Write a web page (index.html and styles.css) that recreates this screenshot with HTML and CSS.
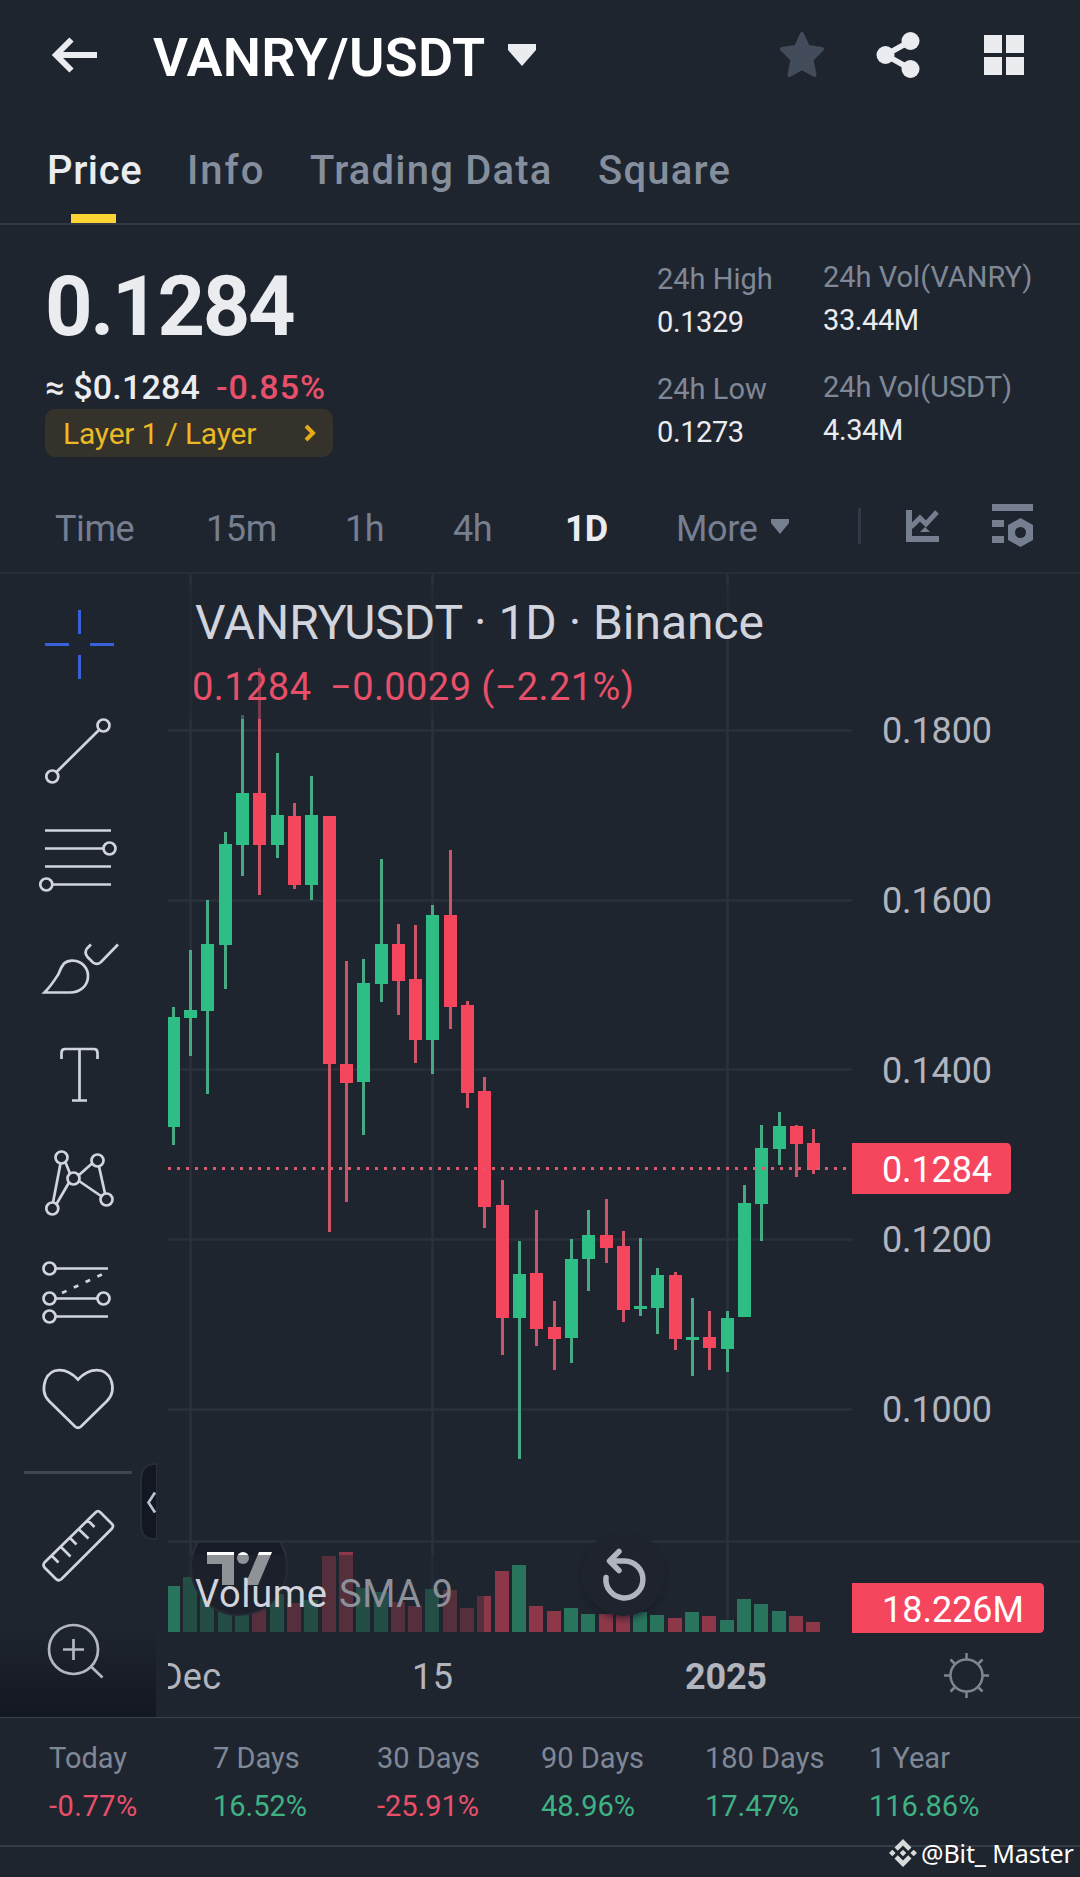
FILE: index.html
```
<!DOCTYPE html>
<html lang="en">
<head>
<meta charset="utf-8">
<title>VANRY/USDT</title>
<link rel="stylesheet" href="styles.css">
</head>
<body>
<header class="topbar">
  <svg class="back" width="46" height="36" viewBox="0 0 46 36"><path d="M45 18H5M19.500 2.500L4 18l15.500 15.500" fill="none" stroke="#eaecef" stroke-width="6"/></svg>
  <h1 class="pair">VANRY/USDT</h1>
  <svg class="pair-caret" width="28" height="23" viewBox="0 0 28 23"><path d="M0 0h28v6L14 22 0 6z" fill="#eaecef"/></svg>
  <svg class="star" width="46" height="48" viewBox="0 0 46 48"><path d="M23 3l6 13 14 2-10.500 10.500L35.500 44 23 37 10.500 44l3-15.500L3 18l14-2z" fill="#434c5a" stroke="#434c5a" stroke-width="4" stroke-linejoin="round"/></svg>
  <svg class="share" width="44" height="48" viewBox="0 0 44 48"><path d="M34.500 10L9.500 24l25 14" fill="none" stroke="#eaecef" stroke-width="5.500"/><g fill="#eaecef"><circle cx="34.500" cy="10" r="9"/><circle cx="9.500" cy="24" r="9"/><circle cx="34.500" cy="38" r="9"/></g></svg>
  <svg class="grid-icon" width="40" height="40" viewBox="0 0 40 40"><path d="M0 0h18v18H0zM22 0h18v18H22zM0 22h18v18H0zM22 22h18v18H22z" fill="#eaecef"/></svg>
</header>

<nav class="tabs">
  <span class="tab tab-active">Price</span>
  <span class="tab tab-info">Info</span>
  <span class="tab tab-data">Trading Data</span>
  <span class="tab tab-square">Square</span>
</nav>

<section class="summary">
  <div class="quote">
    <div class="last">0.1284</div>
    <div class="approx"><span class="usd">≈ $0.1284</span><span class="change">-0.85%</span></div>
    <div class="tag"><span>Layer 1 / Layer</span><svg width="12" height="18" viewBox="0 0 12 18"><path d="M2 2l7 7-7 7" fill="none" stroke="#e3ab16" stroke-width="4"/></svg></div>
  </div>
  <dl class="stats">
    <div><dt>24h High</dt><dd>0.1329</dd></div>
    <div><dt>24h Low</dt><dd>0.1273</dd></div>
  </dl>
  <dl class="stats stats-vol">
    <div><dt>24h Vol(VANRY)</dt><dd>33.44M</dd></div>
    <div><dt>24h Vol(USDT)</dt><dd>4.34M</dd></div>
  </dl>
</section>

<nav class="intervals">
  <span>Time</span><span>15m</span><span>1h</span><span>4h</span><span class="on">1D</span><span class="more">More</span>
  <svg width="18" height="15" viewBox="0 0 18 15"><path d="M0 0h18v4L9 15 0 4z" fill="#767f90"/></svg>
  <i class="divider"></i>
  <svg width="34" height="34" viewBox="0 0 34 34"><path d="M3 1v29h30" fill="none" stroke="#767f90" stroke-width="6"/><path d="M5 18l9-9 6 6L31 3" fill="none" stroke="#767f90" stroke-width="5"/><path d="M14 23l5-5 5 5z" fill="#767f90"/></svg>
  <svg width="42" height="44" viewBox="0 0 42 44"><path d="M0 0h41v7H0zM0 16h12v7H0zM0 32h12v7H0zM28.500 14L41 21v15l-12.500 7L16 36V21z" fill="#767f90"/><circle cx="28.500" cy="28.500" r="5.500" fill="#1f252f"/></svg>
</nav>

<main class="workspace">
  <aside class="tools">
    <svg width="156" height="118" viewBox="0 574 156 118"><path class="cross" d="M45 644.500H69M90 644.500H114M79.500 610V634M79.500 655V679"/></svg>
    <svg width="156" height="118" viewBox="0 692 156 118"><path d="M56.500 772L99 730"/><circle cx="103.500" cy="725.500" r="6"/><circle cx="52.300" cy="776.500" r="6"/></svg>
    <svg width="156" height="118" viewBox="0 810 156 118"><path d="M45 830.500H111M45 848.500H103M45 866.500H111M53 884.500H111"/><circle cx="109.500" cy="848.500" r="6"/><circle cx="46.300" cy="884.500" r="6"/></svg>
    <svg width="156" height="112" viewBox="0 928 156 112"><path d="M44.500 992.500C51 986 54 981 58.500 974C60 970 61 967 64 963.500C67 961 70 960.500 73 960.700C82 961 88 968 88 976C88 986 80 992.500 70 992.500zM91 944.500L87 948.500Q84 952.500 87.500 957L93 962.500Q97 965.500 101 962L118 944.500"/></svg>
    <svg width="156" height="90" viewBox="0 1040 156 90"><path d="M61.500 1059V1053Q61.500 1049 65 1049H94Q97.500 1049 97.500 1053V1059M79.500 1049V1100.500M72 1100.500H87"/></svg>
    <svg width="156" height="110" viewBox="0 1130 156 110"><path d="M60.500 1163.500L53 1202.500M65.500 1162.500L70 1173.500M79 1175L92 1163.500M79 1181L101 1196M69 1182.500L56.500 1204M99 1166.500L105 1193.500"/><circle cx="61.500" cy="1157.500" r="6"/><circle cx="97.500" cy="1160.500" r="6"/><circle cx="73.500" cy="1178.500" r="6"/><circle cx="106.500" cy="1199.500" r="6"/><circle cx="52.300" cy="1208.500" r="6"/></svg>
    <svg width="156" height="110" viewBox="0 1240 156 110"><path d="M56 1268.500H108M56 1298.500H97M56 1316.500H108"/><path d="M62 1293L104 1273.500" stroke-dasharray="5 8"/><circle cx="49.500" cy="1268.500" r="6"/><circle cx="49.500" cy="1298.500" r="6"/><circle cx="103.500" cy="1298.500" r="6"/><circle cx="49.500" cy="1316.500" r="6"/></svg>
    <svg width="156" height="112" viewBox="0 1350 156 112"><path d="M78 1379.500C66 1367 51 1367 45.500 1380C42 1390 44 1396 49 1401L75 1426.500Q78 1429 81 1426.500L107 1401C112 1396 114.500 1390 111 1380C105.500 1367 90 1367 78 1379.500z"/></svg>
    <svg width="156" height="88" viewBox="0 1462 156 88"><path class="rule" d="M24 1472.500H132"/><path class="fold" d="M157 1464H152Q141 1466 141 1480V1524Q141 1538 152 1539H157z"/><path class="fold-arrow" d="M155 1492.500L148.500 1502.500L155 1512.500"/></svg>
    <svg class="low" width="156" height="167" viewBox="0 1550 156 167"><path d="M95.500 1512.500Q98 1510 100.500 1512.500L112 1524Q114 1526 112 1528.500L61.500 1579Q58.500 1581.500 56 1579L44.500 1567.500Q42.500 1565 44.500 1562.500zM52 1556L58.500 1562.500M61 1547L70.500 1556.500M70 1538L76.500 1544.500M79 1529.500L88.500 1538.500M88 1520.500L94.500 1527"/><g class="zoomer"><circle cx="73.500" cy="1649.500" r="24.500"/><path d="M63 1649.500H84M73.500 1639V1660M91 1666.500L102.500 1677.500"/></g></svg>
  </aside>
  <svg id="chart" class="chart" width="912" height="1143" viewBox="168 574 912 1143">
    <defs>
      <clipPath id="volume-pane"><rect x="168" y="1543" width="684" height="90"/></clipPath>
      <filter id="shadow" x="-30%" y="-30%" width="160%" height="160%"><feGaussianBlur stdDeviation="3"/></filter>
    </defs>
    <path class="gridline" d="M168 730.500H852M168 900.500H852M168 1069.500H852M168 1239.500H852M168 1409.500H852M190.500 574V1632M432.500 574V1632M727.500 574V1632M168 1541.500H1080"/>
    <g id="candles"></g>
    <path class="last-line" d="M168 1168.500H852"/>
    <rect class="veil" x="182" y="585" width="600" height="55"/>
    <rect class="veil" x="182" y="640" width="465" height="79"/>
    <text class="symbol" x="195" y="639" textLength="569">VANRYUSDT · 1D · Binance</text>
    <text class="delta" x="192" y="700" textLength="119">0.1284</text>
    <text class="delta" x="330" y="700" textLength="304">−0.0029 (−2.21%)</text>
    <g id="volume"></g>
    <g clip-path="url(#volume-pane)">
      <circle cx="239" cy="1567" r="48" fill="#171b27" stroke="#2b2f3a" stroke-width="2"/>
      <path d="M207 1552h27v33h-12v-21h-15zM259 1552h13l-14 33h-13z" fill="#fff"/><circle cx="243" cy="1558" r="6" fill="#fff"/>
    </g>
    <rect class="veil" x="183" y="1555" width="301" height="78"/>
    <text class="vol" x="195" y="1607" textLength="132">Volume</text>
    <text class="vol sma" x="339" y="1607" textLength="114">SMA 9</text>
    <circle cx="623.500" cy="1578" r="41" fill="#151921" filter="url(#shadow)" opacity=".6"/>
    <circle cx="623.500" cy="1574" r="42" fill="#1f232d"/>
    <path class="reset" d="M606 1577.500A18.500 18.500 0 1 0 624.500 1561H610M619 1551.500L609.500 1561L619 1570.500"/>
    <g class="axis">
      <text x="882" y="743" textLength="110">0.1800</text>
      <text x="882" y="913" textLength="110">0.1600</text>
      <text x="882" y="1083" textLength="110">0.1400</text>
      <text x="882" y="1252" textLength="110">0.1200</text>
      <text x="882" y="1422" textLength="110">0.1000</text>
      <text x="159" y="1689" textLength="62">Dec</text>
      <text x="412" y="1689" textLength="41">15</text>
      <text class="year" x="685" y="1689" textLength="82">2025</text>
    </g>
    <path class="badge" d="M852 1143h154q5 0 5 5v41q0 5-5 5h-154zM852 1583h187q5 0 5 5v40q0 5-5 5h-187z"/>
    <text class="badge-text" x="882" y="1182" textLength="110">0.1284</text>
    <text class="badge-text" x="882" y="1622" textLength="142">18.226M</text>
    <g class="gear"><circle cx="966.500" cy="1675.500" r="16"/><path d="M966.500 1653v6M966.500 1692v6M944 1675.500h6M983 1675.500h6M950.500 1659.500l4 4M978.500 1687.500l4 4M950.500 1691.500l4-4M978.500 1663.500l4-4"/></g>
  </svg>
</main>

<section class="returns">
  <div><span>Today</span><b class="down today">-0.77%</b></div>
  <div><span>7 Days</span><b>16.52%</b></div>
  <div><span>30 Days</span><b class="down">-25.91%</b></div>
  <div><span>90 Days</span><b>48.96%</b></div>
  <div><span>180 Days</span><b>17.47%</b></div>
  <div><span>1 Year</span><b>116.86%</b></div>
</section>

<div class="watermark">
  <svg width="28" height="28" viewBox="0 0 28 28" fill="#d9dadc"><path d="M14 0l8.500 8.500-3.300 3.300L14 6.600l-5.200 5.200-3.300-3.300zM14 28l8.500-8.500-3.300-3.300-5.200 5.200-5.200-5.200-3.300 3.300zM3.300 10.700L6.600 14l-3.300 3.300L0 14zM24.700 10.700L28 14l-3.300 3.300-3.300-3.300zM14 10.700l3.300 3.300-3.300 3.300-3.300-3.300z"/></svg>
  <span>@Bit_ Master</span>
</div>
<script src="chart.js"></script>
</body>
</html>
```
FILE: styles.css
```
* { box-sizing: border-box; }
body { margin: 0; width: 1080px; height: 1877px; overflow: hidden; background: #1f252f; color: #eaecef; font-family: Roboto, "Liberation Sans", sans-serif; position: relative; }
svg { display: block; flex: none; }
span, dt, dd, b, .last { white-space: nowrap; }

.topbar { height: 110px; display: flex; align-items: center; padding-left: 52px; }
.pair { margin: 6px 0 0 55px; width: 336px; font-size: 54px; line-height: 60px; font-weight: 600; color: #fff; letter-spacing: .3px; white-space: nowrap; }
.pair-caret { margin-left: 19px; }
.star { margin-left: 243px; }
.share { margin-left: 51px; }
.grid-icon { margin-left: 64px; }

.tabs { height: 115px; border-bottom: 2px solid #323943; display: flex; padding: 39px 0 0 47px; font-size: 40px; line-height: 44px; font-weight: 500; color: #848e9c; }
.tab { position: relative; letter-spacing: 1.200px; }
.tab-active { width: 140px; color: #eaecef; letter-spacing: .6px; }
.tab-active::after { content: ""; position: absolute; left: 24px; bottom: 0; width: 45px; height: 9px; background: #fcd535; }
.tab-info { width: 123px; letter-spacing: 2px; }
.tab-data { width: 288px; }

.summary { height: 255px; display: flex; padding-left: 45px; }
.quote { width: 612px; padding-top: 40px; }
.last { font-size: 83px; line-height: 84px; font-weight: 700; letter-spacing: -2.300px; }
.approx { display: flex; margin-top: 17px; font-size: 34px; line-height: 42px; font-weight: 500; letter-spacing: .2px; }
.usd { width: 171px; }
.change { color: #e8506a; letter-spacing: 1px; }
.tag { margin-top: 1px; width: 288px; height: 48px; border-radius: 10px; background: #34322b; color: #eab923; display: flex; align-items: center; justify-content: space-between; padding: 0 17px 0 18px; font-size: 30px; letter-spacing: -.2px; }
.stats { margin: 0; width: 166px; padding-top: 34px; font-size: 29px; line-height: 40px; }
.stats div { height: 110px; }
.stats dt { color: #7f8897; }
.stats dd { margin: 3px 0 0; font-size: 29px; letter-spacing: -.4px; }
.stats-vol { padding-top: 32px; width: auto; }

.intervals { height: 94px; border-bottom: 2px solid #272d37; display: grid; grid-template-columns: 151px 139px 108px 112px 111px 95px 87px 48px 86px auto; align-items: center; padding-left: 55px; font-size: 36px; line-height: 40px; color: #767f90; letter-spacing: -.4px; }
.intervals span { padding-top: 5px; }
.intervals .on { color: #eaecef; font-weight: 700; letter-spacing: -1px; }
.divider { width: 3px; height: 36px; background: #323944; }

.workspace { display: flex; height: 1144px; border-bottom: 1px solid #39414b; }
.tools { width: 156px; margin-right: 12px; }
.tools svg { fill: none; stroke: #d1d4dc; stroke-width: 2.700; overflow: visible; }
.tools .cross { stroke: #3861d9; stroke-width: 3; }
.tools .rule { stroke: #434651; stroke-width: 3; }
.tools .fold { fill: #131722; stroke: #272c37; stroke-width: 2; clip-path: inset(0 1px 0 0); }
.tools .fold-arrow { stroke: #b8c4cf; }
.tools .low { background: linear-gradient(to bottom, rgba(19,23,34,0) 45%, #131722 100%); }
.tools .zoomer { stroke: #b4b7c0; }

.chart { overflow: hidden; font-family: Roboto, "Liberation Sans", sans-serif; }
.gridline { stroke: #2b313b; stroke-width: 2.500; fill: none; }
.veil { fill: #1f252f; opacity: .5; }
.last-line { stroke: #dc5a6e; stroke-width: 3; stroke-dasharray: 3 6; }
.symbol { font-size: 48px; fill: #d1d4dc; }
.delta { font-size: 38px; fill: #e8506a; }
.vol { font-size: 38px; fill: #d1d4dc; }
.sma { fill: #8b909a; }
.reset { fill: none; stroke: #b2b5be; stroke-width: 5.500; stroke-linecap: round; stroke-linejoin: round; }
.axis { font-size: 36px; fill: #b2b5be; }
.year { font-weight: 700; }
.badge { fill: #f6465d; }
.badge-text { font-size: 36px; fill: #fff; }
.gear { fill: none; stroke: #80848e; stroke-width: 2.500; }
.candle-up { fill: #2ebd85; }
.candle-down { fill: #f6465d; }
.wick-up { fill: #48a985; }
.wick-down { fill: #d05468; }
.volume-up { fill: #29745d; }
.volume-down { fill: #8c3848; }

.returns { height: 129px; border-bottom: 2px solid #343c46; display: flex; padding: 20px 0 0 49px; }
.returns div { width: 164px; font-size: 29px; line-height: 40px; }
.returns span { display: block; color: #7f8897; }
.returns b { display: block; margin-top: 8px; font-weight: 400; color: #3fb284; }
.returns b.down { color: #e8506a; }
.returns .today { letter-spacing: .5px; }

.watermark { position: absolute; left: 889px; top: 1837px; display: flex; align-items: center; gap: 4px; height: 32px; color: #fff; font-family: "Noto Sans", sans-serif; font-size: 25px; letter-spacing: -.1px; }
```
FILE: chart.js
```
// [direction, bar left edge, high, low, body top, body bottom, volume bar top]
const bars = [
  [1, 167, 1007, 1145, 1017, 1127, 1586], [1, 184, 950, 1056, 1010, 1018, 1577], [1, 201, 900, 1094, 944, 1011, 1590],
  [1, 219, 832, 989, 844, 945, 1590], [1, 236, 715, 876, 793, 845, 1590], [0, 253, 668, 895, 793, 845, 1600],
  [1, 271, 753, 858, 815, 845, 1594], [0, 288, 803, 889, 816, 885, 1603], [1, 305, 776, 900, 815, 885, 1600],
  [0, 323, 816, 1232, 816, 1064, 1556], [0, 340, 961, 1202, 1064, 1083, 1552], [1, 357, 959, 1135, 983, 1082, 1588],
  [1, 375, 859, 1002, 944, 984, 1592], [0, 392, 924, 1015, 944, 981, 1602], [0, 409, 925, 1063, 979, 1040, 1606],
  [1, 426, 905, 1074, 915, 1040, 1589], [0, 444, 850, 1029, 915, 1007, 1590], [0, 461, 1001, 1108, 1005, 1093, 1608],
  [0, 478, 1077, 1228, 1091, 1207, 1596], [0, 496, 1180, 1355, 1205, 1318, 1571], [1, 513, 1241, 1459, 1274, 1318, 1565],
  [0, 530, 1210, 1346, 1273, 1329, 1606], [0, 548, 1301, 1370, 1327, 1339, 1611], [1, 565, 1239, 1363, 1259, 1338, 1608],
  [1, 582, 1210, 1291, 1235, 1259, 1614], [0, 600, 1199, 1263, 1235, 1248, 1614], [0, 617, 1231, 1322, 1246, 1310, 1614],
  [1, 634, 1238, 1316, 1306, 1309, 1612], [1, 651, 1268, 1334, 1275, 1308, 1615], [0, 669, 1272, 1350, 1275, 1339, 1618],
  [1, 686, 1298, 1376, 1337, 1340, 1612], [0, 703, 1311, 1370, 1337, 1348, 1616], [1, 721, 1311, 1372, 1318, 1349, 1620],
  [1, 738, 1185, 1317, 1203, 1317, 1599], [1, 755, 1125, 1241, 1148, 1204, 1604], [1, 773, 1112, 1165, 1126, 1149, 1611],
  [0, 790, 1125, 1177, 1126, 1144, 1616], [0, 807, 1129, 1174, 1143, 1170, 1622]
];
const candles = document.getElementById("candles");
const volume = document.getElementById("volume");
function rect(parent, cls, x, y, width, height) {
  const r = document.createElementNS("http://www.w3.org/2000/svg", "rect");
  for (const [k, v] of Object.entries({ class: cls, x, y, width, height })) r.setAttribute(k, v);
  parent.appendChild(r);
}
for (const [up, x, high, low, top, bottom, vol] of bars) {
  const side = up ? "up" : "down";
  rect(candles, "wick-" + side, x + 5, high, 3, low - high);
  rect(candles, "candle-" + side, x, top, 13, bottom - top);
  rect(volume, "volume-" + side, x - 1, vol, 14, 1632 - vol);
}
```
